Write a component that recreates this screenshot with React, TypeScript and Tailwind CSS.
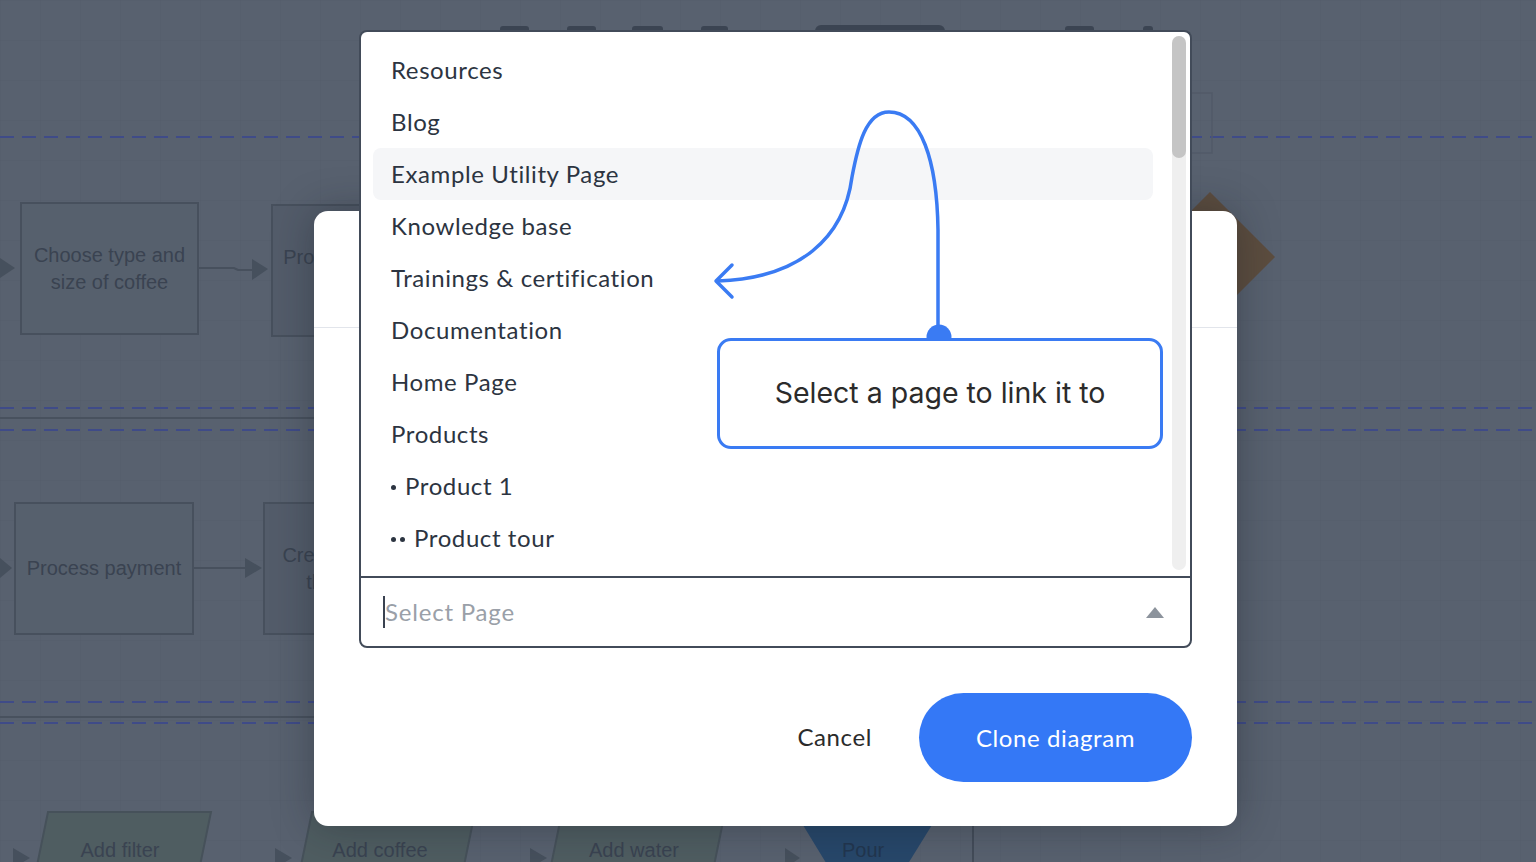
const pages = [
  { label: "Resources", depth: 0 },
  { label: "Blog", depth: 0 },
  { label: "Example Utility Page", depth: 0 },
  { label: "Knowledge base", depth: 0 },
  { label: "Trainings & certification", depth: 0 },
  { label: "Documentation", depth: 0 },
  { label: "Home Page", depth: 0 },
  { label: "Products", depth: 0 },
  { label: "Product 1", depth: 1 },
  { label: "Product tour", depth: 2 },
];

const nodeText = "absolute flex items-center justify-center text-center text-[20px] leading-[27px] text-[#3a4351] font-['Liberation_Sans',Arial,sans-serif]";

const DiagramCanvas = () => {
  return (
    <div className="absolute inset-0">
      <svg width="1536" height="862" className="absolute inset-0">
        <defs>
          <pattern id="grid" width="40" height="40" patternUnits="userSpaceOnUse">
            <path d="M40 0 L0 0 0 40" fill="none" stroke="rgba(0,0,0,0.035)" strokeWidth="1" />
          </pattern>
        </defs>
        <rect width="1536" height="862" fill="url(#grid)" />

        {/* swimlane dividers */}
        {[137, 408, 430, 702, 723].map((y) => (
          <line key={y} x1="0" y1={y} x2="1536" y2={y} stroke="#3f4b88" strokeWidth="2" strokeDasharray="14 8" />
        ))}
        <line x1="0" y1="418" x2="320" y2="418" stroke="#48515e" strokeWidth="2" />
        <line x1="0" y1="717" x2="320" y2="717" stroke="#48515e" strokeWidth="2" />

        {/* toolbar bits peeking above the dropdown */}
        <g fill="#3b4452">
          <rect x="500" y="26" width="29" height="10" rx="3" />
          <rect x="567" y="26" width="29" height="10" rx="3" />
          <rect x="632" y="26" width="31" height="10" rx="3" />
          <rect x="701" y="26" width="27" height="10" rx="3" />
          <rect x="815" y="25" width="130" height="12" rx="6" />
          <rect x="1065" y="26" width="29" height="10" rx="3" />
          <rect x="1143" y="26" width="10" height="10" rx="3" />
        </g>
        <rect x="1050" y="93" width="162" height="60" fill="none" stroke="#515a68" strokeWidth="1.5" />

        {/* row 1 */}
        <polygon points="0,258 15,268 0,278" fill="#46505d" />
        <rect x="21" y="203" width="177" height="131" fill="#56606d" stroke="#47505d" strokeWidth="2" />
        <path d="M198 268 L234 268 L238 270 L254 270" fill="none" stroke="#47505d" strokeWidth="2" />
        <polygon points="252,259 268,269 252,280" fill="#46505d" />
        <rect x="272" y="205" width="178" height="131" fill="#535c6a" stroke="#47505d" strokeWidth="2" />

        {/* row 2 */}
        <polygon points="0,558 12,568 0,578" fill="#46505d" />
        <rect x="15" y="503" width="178" height="131" fill="#56606d" stroke="#47505d" strokeWidth="2" />
        <line x1="193" y1="568" x2="248" y2="568" stroke="#47505d" strokeWidth="2" />
        <polygon points="245,558 262,568 245,578" fill="#46505d" />
        <rect x="264" y="503" width="178" height="131" fill="#535c6a" stroke="#47505d" strokeWidth="2" />

        {/* decision */}
        <polygon points="1210,192 1275,257 1210,322 1145,257" fill="#5c4d3f" />

        {/* row 3 */}
        <polygon points="13,848 30,858 13,868" fill="#46505d" />
        <polygon points="48,812 211,812 195,890 32,890" fill="#4f5d61" stroke="#46515a" strokeWidth="2" />
        <polygon points="275,848 292,858 275,868" fill="#46505d" />
        <polygon points="312,812 475,812 459,890 296,890" fill="#4f5d61" stroke="#46515a" strokeWidth="2" />
        <polygon points="530,848 547,858 530,868" fill="#46505d" />
        <polygon points="562,812 725,812 709,890 546,890" fill="#4f5d61" stroke="#46515a" strokeWidth="2" />
        <polygon points="785,848 800,858 785,868" fill="#46505d" />
        <polygon points="795,812 940,812 867,930" fill="#27476a" />
        <line x1="973" y1="800" x2="973" y2="862" stroke="#434c59" strokeWidth="2" />
      </svg>

      <div className={`${nodeText} left-[21px] top-[203px] h-[131px] w-[177px]`}>
        Choose type and
        <br />
        size of coffee
      </div>
      <div className={`${nodeText} left-[272px] top-[205px] h-[131px] w-[178px]`}>
        Provide customer
        <br />
        name
      </div>
      <div className={`${nodeText} left-[15px] top-[503px] h-[131px] w-[178px]`}>Process payment</div>
      <div className={`${nodeText} left-[264px] top-[503px] h-[131px] w-[178px]`}>
        Create order for
        <br />
        the barista
      </div>
      <div className={`${nodeText} left-[1160px] top-[245px] h-[24px] w-[100px]`}>Clean</div>
      <div className={`${nodeText} left-[40px] top-[839px] h-[23px] w-[160px] leading-[23px]`}>Add filter</div>
      <div className={`${nodeText} left-[300px] top-[839px] h-[23px] w-[160px] leading-[23px]`}>Add coffee</div>
      <div className={`${nodeText} left-[554px] top-[839px] h-[23px] w-[160px] leading-[23px]`}>Add water</div>
      <div className={`${nodeText} left-[842px] top-[839px] h-[23px] leading-[23px] text-[#22364f]`}>Pour</div>
    </div>
  );
};

const PageSelect = () => {
  return (
    <div className="relative h-[72px]">
      <div className="absolute bottom-full left-0 right-0 flex h-[546px] rounded-t-[8px] border-2 border-b-0 border-[#424b59] bg-white">
        <ul className="flex-1 pl-[12px] pr-[19px] pt-[12px]">
          {pages.map((page, i) => (
            <li
              key={page.label}
              className={`flex h-[52px] items-center rounded-[8px] pl-[18px] text-[24px] tracking-[0.6px] text-[#2c3441] ${
                i === 2 ? "bg-[#f5f6f8]" : ""
              }`}
            >
              {page.depth > 0 && (
                <span className="mr-[9px] mt-[3px] flex gap-[4px]">
                  {Array.from({ length: page.depth }).map((_, d) => (
                    <span key={d} className="h-[5px] w-[5px] rounded-full bg-[#2c3441]" />
                  ))}
                </span>
              )}
              {page.label}
            </li>
          ))}
        </ul>
        <div className="mb-[6px] mr-[4px] mt-[4px] w-[14px] rounded-full bg-[#efefef]">
          <div className="h-[122px] rounded-full bg-[#c5c5c5]" />
        </div>
      </div>
      <div className="flex h-[72px] items-center rounded-b-[8px] border-2 border-[#424b59] bg-white pl-[22px] pr-[26px]">
        <span className="h-[32px] w-[2px] bg-[#3a4250]" />
        <span className="flex-1 text-[24px] tracking-[0.8px] text-[#9aa0a8]">Select Page</span>
        <svg width="18" height="11" viewBox="0 0 18 11">
          <polygon points="9,0 18,11 0,11" fill="#8c939c" />
        </svg>
      </div>
    </div>
  );
};

const CloneModal = () => {
  return (
    <div className="absolute left-[314px] top-[211px] flex h-[615px] w-[923px] flex-col rounded-[14px] bg-white shadow-[0_0_40px_rgba(20,25,35,0.35)]">
      <div className="h-[117px] border-b border-[#e2e5eb]" />
      <div className="px-[45px] pt-[248px]">
        <PageSelect />
      </div>
      <div className="mt-[45px] flex items-center justify-end pr-[45px]">
        <button className="mb-[2px] mr-[47px] text-[24px] tracking-[0.6px] text-[#2b2b2b]">Cancel</button>
        <button className="h-[89px] w-[273px] rounded-full bg-[#3478f6] text-[24px] tracking-[0.6px] text-white">
          Clone diagram
        </button>
      </div>
    </div>
  );
};

const Annotation = () => {
  return (
    <>
      <svg width="1536" height="862" className="pointer-events-none absolute inset-0">
        <path
          d="M938 333 L938 230 C937 160 921 112 889 112 C866 112 858 145 852 177 C844 238 800 278 718 281"
          fill="none"
          stroke="#3a7bf3"
          strokeWidth="3.5"
          strokeLinecap="round"
        />
        <path d="M732 265 L716 281 L732 297" fill="none" stroke="#3a7bf3" strokeWidth="3.5" strokeLinecap="round" strokeLinejoin="round" />
        <circle cx="939" cy="337" r="12.5" fill="#3a7bf3" />
      </svg>
      <div className="absolute left-[717px] top-[338px] flex h-[111px] w-[446px] items-center justify-center rounded-[14px] border-[3px] border-[#3a7bf3] bg-white">
        <span className="text-[28.5px] text-[#2b2b2b] font-['Inter',sans-serif]">Select a page to link it to</span>
      </div>
    </>
  );
};

export default function App() {
  return (
    <div className="relative h-[862px] w-[1536px] overflow-hidden bg-[#58616f] font-['Lato','Open_Sans',sans-serif]">
      <DiagramCanvas />
      <CloneModal />
      <Annotation />
    </div>
  );
}
